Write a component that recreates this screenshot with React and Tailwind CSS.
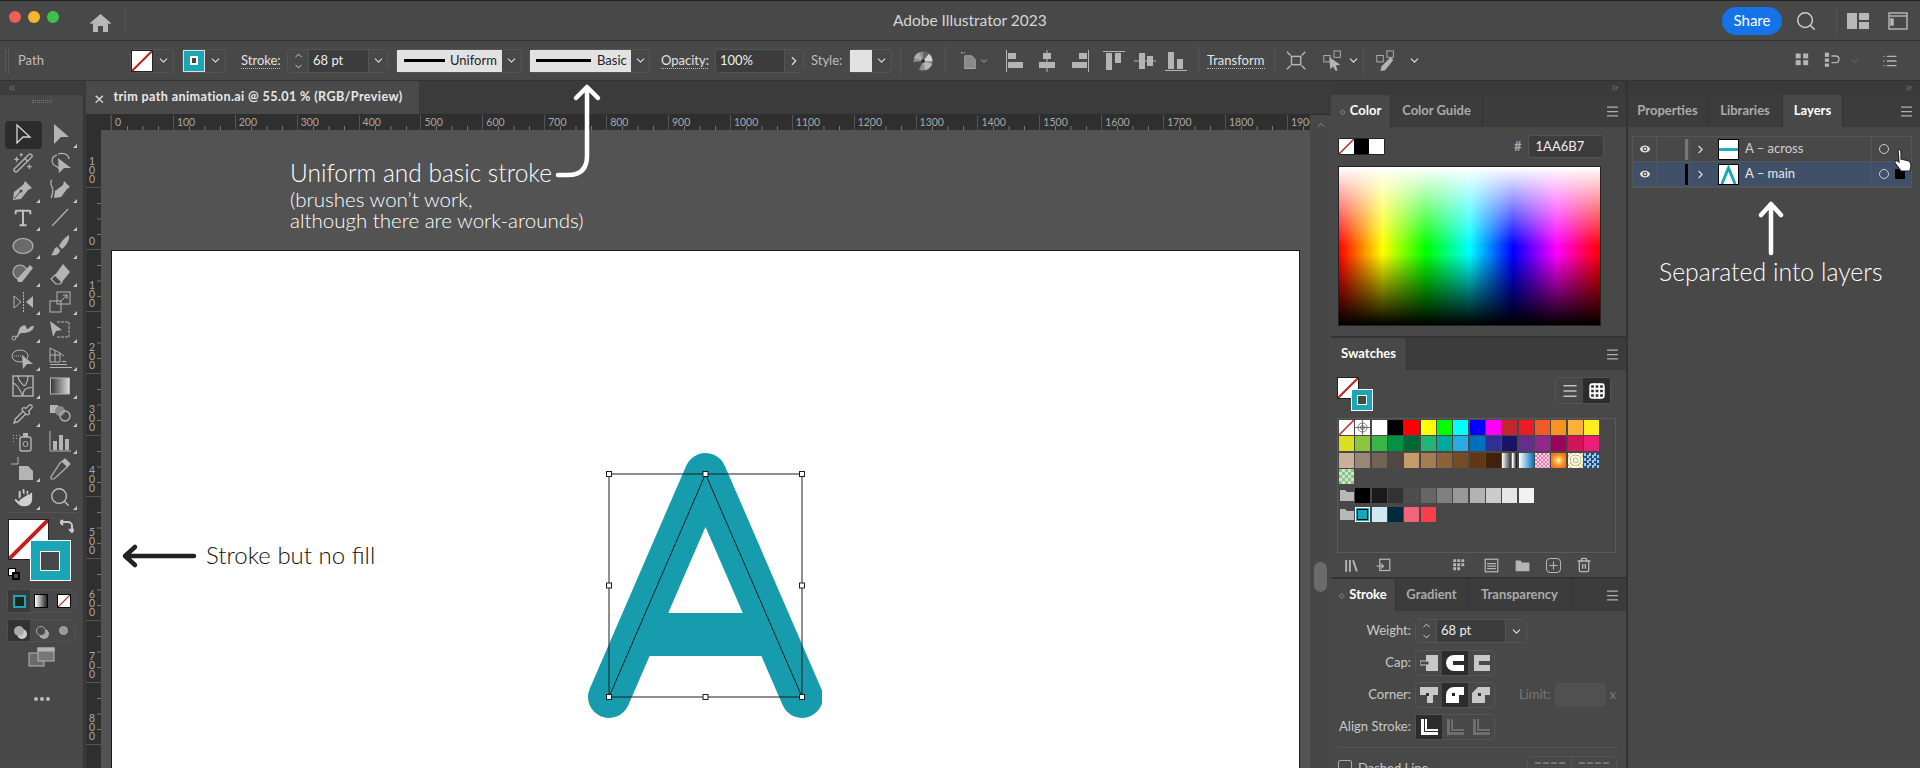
import React from 'react'
import { ChevronDown, ChevronRight, ChevronUp, ChevronsLeft, ChevronsRight, Search, Menu, Trash2, Plus, Eye, List, Grid3x3, Wand2, Type, Pipette, Hand } from 'lucide-react'

const NoneSwatch = ({ className = '' }) => (
  <svg viewBox="0 0 20 20" preserveAspectRatio="none" className={className}>
    <rect width="20" height="20" fill="#fff" />
    <line x1="0" y1="20" x2="20" y2="0" stroke="#c1201f" strokeWidth="2" />
  </svg>
)

const Chev = () => <ChevronDown size={13} strokeWidth={2} className="text-[#dcdcdc]" />

const Divider = ({ className = '' }) => <div className={`h-[28px] w-px bg-[#555] ${className}`} />

const Label = ({ children, className = '' }) => (
  <span className={`border-b border-dotted border-[#bbb] leading-[15px] text-[13px] text-[#e2e2e2] ${className}`}>{children}</span>
)

const G = ({ children, className = '', size = 24, vb = 24 }) => (
  <svg width={size} height={size} viewBox={`0 0 ${vb} ${vb}`} className={className} fill="#b4b4b4" stroke="none">{children}</svg>
)

function AlignIcon({ kind }) {
  const map = {
    l: <><rect x="2" y="1" width="1" height="22" /><rect x="4" y="4" width="8" height="6" /><rect x="4" y="13" width="15" height="6" /></>,
    c: <><rect x="11.5" y="1" width="1" height="22" /><rect x="8" y="4" width="8" height="6" /><rect x="4" y="13" width="16" height="6" /></>,
    r: <><rect x="21" y="1" width="1" height="22" /><rect x="12" y="4" width="8" height="6" /><rect x="5" y="13" width="15" height="6" /></>,
    t: <><rect x="1" y="2" width="22" height="1" /><rect x="4" y="4" width="6" height="17" /><rect x="13" y="4" width="6" height="10" /></>,
    m: <><rect x="1" y="11.5" width="22" height="1" /><rect x="6" y="4" width="6" height="16" /><rect x="14" y="7" width="6" height="10" /></>,
    b: <><rect x="1" y="21" width="22" height="1" /><rect x="4" y="3" width="6" height="17" /><rect x="13" y="10" width="6" height="10" /></>,
  }
  return <G size={24}>{map[kind]}</G>
}

function OptionsBar() {
  return (
    <div className="flex h-[40px] items-center border-b border-[#333] bg-[#484848] pl-[5px]">
      <div className="h-[24px] w-[4px] border-x border-dotted border-[#6a6a6a]" />
      <span className="ml-[9px] w-[112px] text-[13px] text-[#bdbdbd]">Path</span>

      <div className="flex h-[24px] w-[44px] items-center rounded-sm border border-[#555]">
        <NoneSwatch className="h-[22px] w-[22px] shrink-0 border border-[#222]" />
        <div className="flex flex-1 justify-center"><Chev /></div>
      </div>
      <div className="ml-[8px] flex h-[24px] w-[44px] items-center rounded-sm border border-[#555]">
        <div className="flex h-[22px] w-[22px] shrink-0 items-center justify-center border border-[#ddd] bg-[#1aa6b7]">
          <div className="h-[9px] w-[8px] border-2 border-white bg-[#444]" />
        </div>
        <div className="flex flex-1 justify-center"><Chev /></div>
      </div>

      <Label className="ml-[15px] w-[39px]">Stroke:</Label>
      <div className="ml-[7px] flex h-[24px] w-[101px] items-center rounded-sm border border-[#555] bg-[#3c3c3c]">
        <div className="flex h-full w-[21px] flex-col items-center justify-center border-r border-[#555] bg-[#484848]">
          <ChevronUp size={11} className="text-[#ddd]" />
          <ChevronDown size={11} className="text-[#ddd]" />
        </div>
        <span className="ml-[4px] w-[55px] text-[13px] text-[#eee]">68 pt</span>
        <div className="flex h-full flex-1 items-center justify-center border-l border-[#555] bg-[#484848]"><Chev /></div>
      </div>

      <div className="ml-[8px] flex h-[24px] w-[126px] items-center rounded-sm border border-[#555]">
        <div className="flex h-[22px] w-[105px] items-center bg-[#e2e2e2] pl-[7px]">
          <div className="h-[3px] w-[41px] bg-black" />
          <span className="ml-[5px] text-[13px] text-[#222]">Uniform</span>
        </div>
        <div className="flex flex-1 justify-center"><Chev /></div>
      </div>
      <div className="ml-[7px] flex h-[24px] w-[121px] items-center rounded-sm border border-[#555]">
        <div className="flex h-[22px] w-[101px] items-center bg-[#e2e2e2] pl-[6px]">
          <div className="h-[3px] w-[55px] bg-black" />
          <span className="ml-[6px] text-[13px] text-[#222]">Basic</span>
        </div>
        <div className="flex flex-1 justify-center"><Chev /></div>
      </div>

      <Label className="ml-[11px] w-[47px]">Opacity:</Label>
      <div className="ml-[7px] flex h-[24px] w-[89px] items-center rounded-sm border border-[#555] bg-[#3c3c3c]">
        <span className="ml-[4px] w-[64px] text-[13px] text-[#eee]">100%</span>
        <div className="flex h-full flex-1 items-center justify-center border-l border-[#555] bg-[#484848]">
          <ChevronRight size={14} className="text-[#ddd]" />
        </div>
      </div>
      <span className="ml-[7px] w-[30px] text-[13px] text-[#bdbdbd]">Style:</span>
      <div className="ml-[8px] flex h-[24px] w-[43px] items-center rounded-sm border border-[#555]">
        <div className="h-[22px] w-[22px] shrink-0 bg-[#e2e2e2]" />
        <div className="flex flex-1 justify-center"><Chev /></div>
      </div>
      <Divider className="ml-[8px]" />

      <svg width="20" height="20" viewBox="0 0 20 20" className="ml-[12px]">
        <circle cx="10" cy="10" r="9.5" fill="#8f8f8f" />
        <path d="M10 10 L10 .5 A9.5 9.5 0 0 1 16 3 Z" fill="#666" />
        <path d="M10 10 L16 3 A9.5 9.5 0 0 1 19.500 10 Z" fill="#d4d4d4" />
        <path d="M10 10 L19 13 A9.5 9.5 0 0 1 12 19.3 Z" fill="#b5b5b5" />
        <path d="M10 10 L6 19 A9.5 9.5 0 0 1 .6 11 Z" fill="#4a4a4a" />
        <path d="M10 10 L1 7 A9.5 9.5 0 0 1 6 1.400 Z" fill="#adadad" />
        <circle cx="10" cy="10" r="2" fill="#333" />
      </svg>
      <Divider className="ml-[12px]" />

      <div className="ml-[15px] flex w-[28px] items-center">
        <G size={18}><path d="M5 5h9l5 5v12H5z" fill="#888" stroke="#bbb" /><rect x="0" y="0" width="2" height="2" /><rect x="4" y="0" width="1" height="2" /></G>
        <ChevronDown size={10} className="text-[#bbb]" />
      </div>
      <div className="ml-[15px] flex"><AlignIcon kind="l" /></div>
      <div className="ml-[7px] flex"><AlignIcon kind="c" /></div>
      <div className="ml-[8px] flex"><AlignIcon kind="r" /></div>
      <div className="ml-[11px] flex"><AlignIcon kind="t" /></div>
      <div className="ml-[7px] flex"><AlignIcon kind="m" /></div>
      <div className="ml-[7px] flex"><AlignIcon kind="b" /></div>
      <Divider className="ml-[10px]" />
      <Label className="ml-[8px] w-[58px]">Transform</Label>
      <Divider className="ml-[9px]" />

      <G size={22} className="ml-[11px]">
        <rect x="6" y="7" width="10" height="9" fill="none" stroke="#b4b4b4" strokeWidth="1.6" />
        <path d="M1 2l4 4M21 2l-4 4M1 21l4-4M21 21l-4-4" stroke="#b4b4b4" strokeWidth="1.6" />
      </G>
      <G size={22} className="ml-[14px]">
        <rect x="2" y="6" width="7" height="7" fill="none" stroke="#b4b4b4" />
        <rect x="13" y="1" width="7" height="7" fill="none" stroke="#b4b4b4" />
        <path d="M8 8l12 8-5 1 2 5-2 1-3-5-3 3z" />
      </G>
      <ChevronDown size={13} className="ml-[3px] text-[#e0e0e0]" />
      <Divider className="ml-[3px]" />
      <G size={22} className="ml-[11px]">
        <rect x="2" y="6" width="7" height="7" fill="none" stroke="#b4b4b4" />
        <rect x="13" y="1" width="7" height="7" fill="none" stroke="#b4b4b4" />
        <path d="M17 8l3 3-9 11-5 1 1-5z" />
      </G>
      <ChevronDown size={13} className="ml-[11px] text-[#e0e0e0]" />

      <G size={20} className="ml-[373px]">
        <rect x="2" y="3" width="6" height="6" /><rect x="11" y="3" width="6" height="6" /><rect x="2" y="11" width="6" height="6" /><rect x="11" y="11" width="6" height="6" />
        <rect x="0" y="9.4" width="20" height="1" fill="#484848" />
      </G>
      <G size={20} className="ml-[10px]">
        <rect x="1" y="2" width="5" height="5" /><rect x="1" y="9" width="5" height="4" /><rect x="1" y="15" width="5" height="4" />
        <path d="M9 6h5a4 4 0 0 1 0 8H9" fill="none" stroke="#b4b4b4" strokeWidth="1.6" />
      </G>
      <ChevronDown size={12} className="ml-[5px] text-[#6e6e6e]" />
      <List size={16} className="ml-[21px] text-[#b4b4b4]" />
    </div>
  )
}

const cornerTools = [1, 4, 5, 6, 7, 8, 9, 10, 11, 12, 13, 14, 15, 16, 17, 18, 19, 20, 21, 23, 24, 26, 27]

const icons = [
  <G><path d="M6 2l13 12h-7l-6 6z" fill="none" stroke="#d8d8d8" strokeWidth="1.3" /></G>,
  <G><path d="M6 1l15 13h-8l-7 7z" /></G>,
  <Wand2 size={22} strokeWidth={1.5} className="text-[#b4b4b4]" />,
  <G><path d="M10 3c6-2 11 1 11 5M9 4c-5 1-6 6-4 9s6 2 6 5" fill="none" stroke="#b4b4b4" strokeWidth="1.2" /><path d="M10 7l13 10h-7l-5 5z" /></G>,
  <G><path d="M14 3l7 7-4 2-7 9-8 1 1-8 9-7z" /><circle cx="10" cy="13" r="1.5" fill="#484848" /><path d="M3 21l6-7" stroke="#484848" /></G>,
  <G><path d="M16 3l6 6-3 2-6 8-7 1 1-7 8-6z" /><path d="M4 2c-5 5 5 6-1 18" fill="none" stroke="#b4b4b4" strokeWidth="1.2" /></G>,
  <Type size={22} strokeWidth={2.2} className="text-[#c0c0c0]" />,
  <G><line x1="4" y1="20" x2="20" y2="3" stroke="#b4b4b4" strokeWidth="1.2" /></G>,
  <G><ellipse cx="12" cy="12" rx="10" ry="7.5" fill="#6a6a6a" stroke="#b4b4b4" strokeWidth="1.2" /></G>,
  <G><path d="M21 1c1 5-3 11-7 14l-3-3c2-4 6-9 10-11zM9 13l3 3c0 4-4 6-9 5 3-2 2-7 6-8z" /></G>,
  <G><circle cx="9" cy="10" r="7" fill="#6a6a6a" stroke="#b4b4b4" strokeWidth="1.2" /><path d="M22 6l-11 14h-4l-1-3L19 3z" /></G>,
  <G><path d="M15 2l7 8-8 10-7-7z" /><path d="M7 13l7 7-2 2H8l-5-5z" fill="none" stroke="#b4b4b4" strokeWidth="1.2" /></G>,
  <G><path d="M3 6l7 6-7 6z" fill="none" stroke="#b4b4b4" /><path d="M22 6l-7 6 7 6z" /><line x1="12.5" y1="2" x2="12.5" y2="23" stroke="#b4b4b4" strokeDasharray="2 1" /></G>,
  <G><rect x="9" y="2" width="13" height="12" fill="none" stroke="#b4b4b4" /><rect x="2" y="11" width="11" height="11" fill="none" stroke="#b4b4b4" /><path d="M13 11l6-6M15 5h4v4" fill="none" stroke="#b4b4b4" /></G>,
  <G><path d="M3 20c6-3 3-9 8-12s4 4 6 3 3-4 6-3c-1 6-7 7-11 7s-4 2-5 4" /><circle cx="3" cy="20" r="2" fill="none" stroke="#b4b4b4" /></G>,
  <G><path d="M2 3l12 9-6 1-3 6z" /><path d="M9 4h12v15H8" fill="none" stroke="#b4b4b4" strokeDasharray="3 1" /></G>,
  <G><ellipse cx="9" cy="10" rx="8" ry="6" fill="none" stroke="#b4b4b4" /><path d="M11 9l11 9h-6l-4 5z" /><line x1="3" y1="10" x2="12" y2="10" stroke="#b4b4b4" strokeDasharray="1 1" /></G>,
  <G><path d="M2 2l10 5v9H2zM12 7l4 3M2 9h10M7 4v12" fill="none" stroke="#b4b4b4" /><path d="M2 18h17v1H2zM2 21h22v1H2zM14 15h4v1h-4z" /></G>,
  <G><rect x="2" y="2" width="20" height="20" fill="none" stroke="#b4b4b4" strokeWidth="1.4" /><path d="M2 9c6 2 6 7 10 13M12 22c0-7 3-8 10-9M7 2c0 5 3 6 5 9s5-4 5-9" fill="none" stroke="#b4b4b4" strokeWidth="1.2" /></G>,
  <svg width="20" height="20" viewBox="0 0 20 20"><defs><linearGradient id="tg"><stop stopColor="#333" /><stop offset="1" stopColor="#ddd" /></linearGradient></defs><rect x=".5" y="2" width="19" height="16" fill="url(#tg)" stroke="#b4b4b4" /></svg>,
  <Pipette size={22} strokeWidth={1.5} className="text-[#b4b4b4]" />,
  <G><rect x="2" y="3" width="8" height="8" /><circle cx="12" cy="9" r="5" fill="#888" /><circle cx="17" cy="14" r="5" fill="none" stroke="#b4b4b4" strokeWidth="1.4" /></G>,
  <G><rect x="9" y="8" width="11" height="14" rx="2" fill="none" stroke="#b4b4b4" strokeWidth="1.4" /><circle cx="14.5" cy="15" r="2.5" fill="none" stroke="#b4b4b4" /><rect x="12" y="4" width="5" height="4" /><path d="M2 6h1v1H2zM5 6h1v1H5zM8 6h1v1H8zM2 9h1v1H2zM5 9h1v1H5zM2 12h1v1H2z" /></G>,
  <G><path d="M2 2v20h21" fill="none" stroke="#b4b4b4" /><rect x="5" y="12" width="4" height="9" /><rect x="11" y="6" width="4" height="15" /><rect x="17" y="10" width="4" height="11" /></G>,
  <G><path d="M8 9h9l5 5v9H8z" /><path d="M7 0v7M0 7h7" stroke="#b4b4b4" fill="none" /></G>,
  <G><path d="M17 2l5 5-3 3-13 12H3v-2l9-14z" fill="none" stroke="#b4b4b4" strokeWidth="1.2" /><path d="M17 2l5 5-3 3-5-5z" /></G>,
  <Hand size={23} fill="#d0d0d0" className="text-[#484848]" />,
  <Search size={22} strokeWidth={1.5} className="text-[#c0c0c0]" />,
]

function Toolbar() {
  return (
    <div className="flex w-[86px] shrink-0 flex-col">
      <div className="flex h-[14px] items-center bg-[#3c3c3c] pl-[7px]">
        <ChevronsLeft size={10} className="text-[#8a8a8a]" />
      </div>
      <div className="flex h-full w-[84px] flex-col items-center border-r border-[#333] bg-[#484848]">
        <div className="mt-[5px] h-[3px] w-[20px] border-y border-dotted border-[#777]" />
        <div className="mt-[18px] grid w-[74px] grid-cols-2 auto-rows-[27.9px]">
          {icons.map((icon, i) => (
            <div key={i} className={`relative flex items-center justify-center ${i === 0 ? 'rounded-sm bg-[#2c2c2c]' : ''}`}>
              {icon}
              {cornerTools.includes(i) && (
                <div className="absolute bottom-[1px] right-[2px] h-0 w-0 border-b-[4px] border-l-[4px] border-b-[#c8c8c8] border-l-transparent" />
              )}
            </div>
          ))}
        </div>

        <div className="relative mt-[1px] h-[65px] w-[70px] border-t border-[#555]">
          <NoneSwatch className="absolute left-[1px] top-[6px] h-[41px] w-[41px] border border-[#222]" />
          <div className="absolute left-[23px] top-[27px] flex h-[41px] w-[41px] items-center justify-center border border-white bg-[#1aa6b7]">
            <div className="h-[20px] w-[20px] border border-white bg-[#484848]" />
          </div>
          <svg width="14" height="14" viewBox="0 0 14 14" className="absolute left-[53px] top-[6px]" fill="none" stroke="#c8c8c8" strokeWidth="2">
            <path d="M1 3h7a4 4 0 0 1 4 4v5M0 3l3-2M0 3l3 3M9 10l3 3 2-3" />
          </svg>
          <div className="absolute left-[1px] top-[55px] h-[8px] w-[8px] border border-black bg-white" />
          <div className="absolute left-[5px] top-[59px] h-[8px] w-[8px] border-2 border-black bg-[#484848]" />
        </div>

        <div className="mt-[12px] flex w-[69px] rounded-sm border border-[#505050]">
          <div className="flex h-[22px] w-[23px] items-center justify-center bg-[#3a3a3a]">
            <div className="h-[13px] w-[13px] border-2 border-[#1aa6b7] bg-[#222]" />
          </div>
          <div className="flex h-[22px] w-[23px] items-center justify-center">
            <div className="h-[14px] w-[14px] border border-black bg-[linear-gradient(to_right,#fff,#222)]" />
          </div>
          <div className="flex h-[22px] w-[23px] items-center justify-center">
            <NoneSwatch className="h-[14px] w-[14px] border border-black" />
          </div>
        </div>
        <div className="mt-[6px] flex w-[69px] rounded-sm border border-[#505050]">
          <div className="flex h-[21px] w-[23px] items-center justify-center bg-[#333]">
            <div className="h-[10px] w-[10px] rounded-full bg-[#aaa] shadow-[3px_3px_0_#ccc]" />
          </div>
          <div className="flex h-[21px] w-[23px] items-center justify-center">
            <div className="h-[10px] w-[10px] rounded-full border border-[#aaa] shadow-[3px_3px_0_#aaa]" />
          </div>
          <div className="flex h-[21px] w-[23px] items-center justify-center">
            <div className="h-[9px] w-[9px] rounded-full border border-[#aaa] bg-[#999]" />
          </div>
        </div>
        <svg width="28" height="20" viewBox="0 0 28 20" className="mt-[5px]" fill="#6a6a6a" stroke="#b4b4b4">
          <rect x="1" y="6" width="15" height="13" />
          <rect x="10" y="1" width="16" height="13" fill="#777" />
          <rect x="10" y="1" width="16" height="3" fill="#b4b4b4" />
        </svg>
        <div className="mt-[30px] flex gap-[2px]">
          <div className="h-[4px] w-[4px] rounded-full bg-[#bbb]" />
          <div className="h-[4px] w-[4px] rounded-full bg-[#bbb]" />
          <div className="h-[4px] w-[4px] rounded-full bg-[#bbb]" />
        </div>
      </div>
    </div>
  )
}

const MinorTicksH = () => (
  <svg width="62" height="4" className="absolute bottom-0 left-0" stroke="#777">
    <line x1="15.5" y1="0" x2="15.5" y2="4" /><line x1="31" y1="0" x2="31" y2="4" /><line x1="46.5" y1="0" x2="46.5" y2="4" />
  </svg>
)

const MinorTicksV = () => (
  <svg width="4" height="62" className="absolute right-0 top-0" stroke="#777">
    <line x1="0" y1="15.5" x2="4" y2="15.5" /><line x1="0" y1="31" x2="4" y2="31" /><line x1="0" y1="46.5" x2="4" y2="46.5" />
  </svg>
)

const HRULER = ['0', '100', '200', '300', '400', '500', '600', '700', '800', '900', '1000', '1100', '1200', '1300', '1400', '1500', '1600', '1700', '1800', '1900']
const VRULER = ['0', '100', '200', '300', '400', '500', '600', '700', '800']

function Rulers() {
  return (
    <div className="flex h-[15px] shrink-0 bg-[#2f2f2f]">
      <div className="w-[25px] shrink-0 border-r border-[#444]" />
      {HRULER.map((n, i) => (
        <div key={i} className="relative h-full w-[61.9px] shrink-0 overflow-hidden border-l border-[#555] pl-[3px] text-[10.5px] leading-[14px] text-[#a8a8a8]">
          {n}
          <MinorTicksH />
        </div>
      ))}
    </div>
  )
}

function RulerLabel({ n }) {
  return n.split('').map((c, j) => <span key={j}>{c}</span>)
}

function Canvas() {
  return (
    <div className="relative flex min-h-0 flex-1 overflow-hidden">
      <div className="flex w-[15px] shrink-0 flex-col bg-[#2f2f2f]">
        <div className="relative flex h-[58px] shrink-0 flex-col items-center justify-end border-b border-[#555] pb-[3px] pr-[3px] text-[10.5px] leading-[9px] text-[#a8a8a8]">
          <RulerLabel n="100" />
        </div>
        {VRULER.map((n) => (
          <div key={n} className="relative flex h-[61.9px] shrink-0 flex-col items-center justify-end border-b border-[#555] pb-[3px] pr-[3px] text-[10.5px] leading-[9px] text-[#a8a8a8]">
            <RulerLabel n={n} />
            <MinorTicksV />
          </div>
        ))}
      </div>
      <div className="min-w-0 flex-1 bg-[#535353] pl-[10px] pr-[10px] pt-[120px]">
        <div className="relative h-[600px] border border-[#1a1a1a] bg-white">
          <svg width="240" height="300" viewBox="0 0 240 300" className="absolute left-[470px] top-[190px]">
            <g fill="none" stroke="#179cad" strokeWidth="42" strokeLinecap="round" strokeLinejoin="round">
              <path d="M27 256 L123.5 33 L220 256" />
            </g>
            <rect x="50" y="172" width="150" height="43" fill="#179cad" />
            <g fill="none" stroke="#1f1f1f" strokeWidth="1">
              <path d="M27 256 L123.5 33 L220 256" />
              <rect x="27" y="33" width="193" height="223" />
            </g>
            <g fill="#fff" stroke="#1f1f1f">
              {[[27, 33], [123.5, 33], [220, 33], [27, 144.5], [220, 144.5], [27, 256], [123.5, 256], [220, 256]].map(([x, y]) => (
                <rect key={`${x}-${y}`} x={x - 2.5} y={y - 2.5} width="5" height="5" />
              ))}
            </g>
          </svg>
        </div>
      </div>
    </div>
  )
}

function DocumentArea() {
  return (
    <div className="flex w-[1245px] shrink-0 flex-col">
      <div className="flex h-[34px] shrink-0 border-b border-[#2e2e2e] bg-[#3b3b3b]">
        <div className="flex w-[333px] items-center bg-[#4a4a4a] pl-[8px]">
          <span className="text-[18px] leading-none text-[#dedede]">×</span>
          <span className="ml-[9px] text-[12.6px] font-bold tracking-[0.38px] text-[#e8e8e8]">trim path animation.ai @ 55.01 % (RGB/Preview)</span>
        </div>
      </div>
      <div className="flex min-h-0 flex-1">
        <div className="flex min-w-0 flex-1 flex-col overflow-hidden">
          <Rulers />
          <Canvas />
        </div>
        <div className="relative w-[21px] shrink-0 bg-[#474747]">
          <ChevronUp size={12} className="mx-auto mt-[4px] text-[#8a8a8a]" />
          <div className="mx-auto mt-[431px] h-[30px] w-[13px] rounded-full bg-[#6b6b6b]" />
        </div>
      </div>
    </div>
  )
}

const SWATCHES = [
  'bg-white', 'bg-white', 'bg-white', 'bg-black', 'bg-[#ff0000]', 'bg-[#ffff00]', 'bg-[#00ff00]', 'bg-[#00ffff]', 'bg-[#0000ff]', 'bg-[#ff00ff]', 'bg-[#c1272d]', 'bg-[#ed1c24]', 'bg-[#f15a24]', 'bg-[#f7931e]', 'bg-[#fbb03b]', 'bg-[#fcee21]',
  'bg-[#d9e021]', 'bg-[#8cc63f]', 'bg-[#39b54a]', 'bg-[#009245]', 'bg-[#006837]', 'bg-[#22b573]', 'bg-[#00a99d]', 'bg-[#29abe2]', 'bg-[#0071bc]', 'bg-[#2e3192]', 'bg-[#1b1464]', 'bg-[#662d91]', 'bg-[#93278f]', 'bg-[#9e005d]', 'bg-[#d4145a]', 'bg-[#ed1e79]',
  'bg-[#c7b299]', 'bg-[#998675]', 'bg-[#736357]', 'bg-[#534741]', 'bg-[#c69c6d]', 'bg-[#a67c52]', 'bg-[#8c6239]', 'bg-[#754c24]', 'bg-[#603813]', 'bg-[#42210b]',
  'bg-[linear-gradient(to_right,#fff,#333_60%,#fff_70%,#000)]', 'bg-[linear-gradient(to_right,#fff,#0071bc)]',
  'bg-[repeating-conic-gradient(#f07ab0_0_25%,#fbd5e5_0_50%)] bg-[length:4px_4px]', 'bg-[radial-gradient(circle,#fff2b0,#f7931e_50%,#f15a24)]',
  'bg-[repeating-radial-gradient(circle,#fff8e0_0_2px,#c8c090_2px_3px)]', 'bg-[repeating-conic-gradient(#1b4f8a_0_25%,#a8c8e0_0_50%)] bg-[length:5px_5px]',
  'bg-[repeating-conic-gradient(#d8e8a0_0_25%,#80c0b0_0_50%)] bg-[length:6px_6px]',
]
const GRAYS = ['bg-black', 'bg-[#1a1a1a]', 'bg-[#333]', 'bg-[#4d4d4d]', 'bg-[#666]', 'bg-[#808080]', 'bg-[#999]', 'bg-[#b3b3b3]', 'bg-[#ccc]', 'bg-[#e6e6e6]', 'bg-[#f2f2f2]']
const TEAMS = ['bg-[#d0e8f0]', 'bg-[#002b3f]', 'bg-[#f1647a]', 'bg-[#fb3f4a]']

const Folder = () => (
  <svg width="14" height="12" viewBox="0 0 14 12" fill="#b8b8b8"><path d="M0 1h5l2 2h7v9H0z" /></svg>
)

function PanelHead({ tabs, widths, dots }) {
  return (
    <div className="flex h-[32px] shrink-0 items-stretch bg-[#3c3c3c]">
      {tabs.map((t, i) => (
        <div key={t.name} className={`flex items-center justify-center border-r border-[#333] text-[13px] font-bold ${widths[i]} ${t.on ? 'bg-[#484848] text-white' : 'text-[#ababab]'}`}>
          {dots && t.on && <span className="mr-[5px] text-[7px] leading-[7px] text-[#8a8a8a]">◇</span>}
          {t.name}
        </div>
      ))}
      <div className="ml-auto flex items-center pr-[6px]"><Menu size={15} className="text-[#b0b0b0]" /></div>
    </div>
  )
}

function ColorPanel() {
  return (
    <div className="h-[257px] shrink-0 border-b-2 border-[#333] bg-[#484848]">
      <div className="flex h-[14px] items-center justify-end bg-[#3a3a3a] pr-[6px]"><ChevronsRight size={10} className="text-[#8a8a8a]" /></div>
      <PanelHead tabs={[{ name: 'Color', on: true }, { name: 'Color Guide' }]} widths={['w-[60px]', 'w-[92px]']} dots />
      <div className="px-[7px]">
        <div className="flex h-[39px] items-center">
          <div className="flex rounded-[2px] border border-[#222]">
            <NoneSwatch className="h-[15px] w-[15px]" />
            <div className="h-[15px] w-[15px] bg-black" />
            <div className="h-[15px] w-[15px] bg-white" />
          </div>
          <span className="ml-[129px] text-[13px] font-bold text-[#aaa]">#</span>
          <div className="ml-[6px] flex h-[23px] w-[76px] items-center rounded-sm border border-[#555] bg-[#3c3c3c] pl-[7px] text-[13px] text-[#eee]">1AA6B7</div>
        </div>
        <div className="h-[160px] w-[263px] border border-[#222] bg-[linear-gradient(to_bottom,#fff,transparent_50%,transparent_55%,#000),linear-gradient(to_right,#f00,#ff0,#0f0,#0ff,#00f,#f0f,#f00)]" />
      </div>
    </div>
  )
}

function SwatchesPanel() {
  return (
    <div className="h-[241px] shrink-0 border-b-2 border-[#333] bg-[#484848]">
      <PanelHead tabs={[{ name: 'Swatches', on: true }]} widths={['w-[76px]']} />
      <div className="px-[6px] pt-[7px]">
        <div className="flex h-[34px] justify-between pr-[9px]">
          <div className="relative h-[34px] w-[36px]">
            <NoneSwatch className="absolute left-0 top-0 h-[22px] w-[22px] border border-[#222]" />
            <div className="absolute bottom-0 right-0 flex h-[22px] w-[22px] items-center justify-center border border-white bg-[#1aa6b7]">
              <div className="h-[10px] w-[10px] border border-white bg-[#484848]" />
            </div>
          </div>
          <div className="flex h-[27px] w-[56px] rounded-sm border border-[#555]">
            <div className="flex w-[28px] items-center justify-center"><Menu size={18} className="text-[#c0c0c0]" /></div>
            <div className="flex w-[28px] items-center justify-center bg-[#2c2c2c]"><Grid3x3 size={18} strokeWidth={2.4} className="text-white" /></div>
          </div>
        </div>
        <div className="mt-[7px] h-[135px] w-[279px] border border-[#5a5a5a] px-[1px] pt-[1px]">
          <div className="grid grid-cols-[repeat(16,15px)] gap-[1.33px]">
            {SWATCHES.map((c, i) => (
              <div key={i} className={`h-[15px] w-[15px] ${c}`}>
                {i === 0 && <NoneSwatch className="h-full w-full" />}
                {i === 1 && (
                  <svg viewBox="0 0 15 15" fill="none" stroke="#555" strokeWidth=".8"><circle cx="7.5" cy="7.5" r="4.5" /><circle cx="7.5" cy="7.5" r="2" /><path d="M0 7.5h15M7.5 0v15" /></svg>
                )}
              </div>
            ))}
          </div>
          <div className="mt-[4px] grid grid-cols-[repeat(16,15px)] gap-[1.33px]">
            <div className="flex h-[15px] items-center justify-center"><Folder /></div>
            {GRAYS.map((c, i) => <div key={i} className={`h-[15px] w-[15px] ${c}`} />)}
          </div>
          <div className="mt-[4px] grid grid-cols-[repeat(16,15px)] gap-[1.33px]">
            <div className="flex h-[15px] items-center justify-center"><Folder /></div>
            <div className="flex h-[15px] w-[15px] items-center justify-center border border-white bg-[#1aa6b7]"><div className="h-[11px] w-[11px] border border-black bg-[#1aa6b7]" /></div>
            {TEAMS.map((c, i) => <div key={i} className={`h-[15px] w-[15px] ${c}`} />)}
          </div>
        </div>
        <div className="mt-[4px] flex items-center pl-[7px] text-[#b8b8b8]">
          <G size={15}><path d="M2 3h3v19H2zM8 3h3v19H8zM13 4l3-1 6 18-3 1z" /></G>
          <G size={15} className="ml-[17px]"><rect x="6" y="2" width="16" height="18" fill="none" stroke="#b4b4b4" strokeWidth="2" /><path d="M1 13h11M8 9l4 4-4 4" fill="none" stroke="#b4b4b4" strokeWidth="2" /></G>
          <G size={14} className="ml-[61px]"><path d="M2 2h5v5H2zM9 2h5v5H9zM16 2h5v5h-5zM2 9h5v5H2zM9 9h5v5H9zM16 9h5v5h-5zM2 16h5v5H2zM9 16h5v5H9z" /></G>
          <G size={15} className="ml-[18px]"><rect x="2" y="2" width="20" height="20" fill="none" stroke="#b4b4b4" strokeWidth="2" /><path d="M5 8h14v2H5zM5 12h14v2H5zM5 16h14v2H5z" /></G>
          <G size={15} className="ml-[16px]"><path d="M1 4h8l2 3h12v14H1z" /></G>
          <Plus size={15} className="ml-[16px] rounded-sm border border-[#b4b4b4]" />
          <Trash2 size={16} className="ml-[15px]" />
        </div>
      </div>
    </div>
  )
}

const Seg = ({ on, children, className = '' }) => (
  <div className={`flex h-[24px] w-[26px] items-center justify-center ${on ? 'bg-[#2c2c2c]' : ''} ${className}`}>{children}</div>
)

const capIcon = (fill, kind) => (
  <svg width="18" height="16" viewBox="0 0 18 16" fill={fill}>
    {kind === 0 && <><path d="M6 0h12v16H6z" /><rect x="0" y="6" width="9" height="4" fill="#484848" stroke="#c8c8c8" /></>}
    {kind === 1 && <><path d="M8 0h10v16H8a8 8 0 0 1 0-16z" /><rect x="7" y="6" width="11" height="4" fill="#2c2c2c" /></>}
    {kind === 2 && <><path d="M2 0h16v16H2z" /><rect x="7" y="6" width="11" height="4" fill="#484848" /></>}
    {kind === 3 && <><path d="M0 0h18v8h-5v8H7V8H0z" /><rect x="6" y="6" width="3" height="3" fill="#333" /></>}
    {kind === 4 && <><path d="M8 0h10v8h-5v8H0V8a8 8 0 0 1 8-8z" /><rect x="6" y="6" width="3" height="3" fill="#222" /></>}
    {kind === 5 && <><path d="M6 0h12v8h-5v8H0V6z" /><rect x="6" y="6" width="3" height="3" fill="#333" /></>}
    {kind === 6 && <><path d="M1 0h6v10h11v6H1z" /><rect x="4" y="0" width="1" height="13" fill="#2c2c2c" /><rect x="4" y="12" width="14" height="1" fill="#2c2c2c" /></>}
  </svg>
)

function StrokePanel() {
  return (
    <div className="min-h-0 flex-1 bg-[#484848]">
      <PanelHead tabs={[{ name: 'Stroke', on: true }, { name: 'Gradient' }, { name: 'Transparency' }]} widths={['w-[65px]', 'w-[72px]', 'w-[104px]']} dots />
      <div className="pt-[8px] text-[13px] text-[#c8c8c8]">
        <div className="flex h-[24px] items-center">
          <span className="w-[80px] text-right">Weight:</span>
          <div className="ml-[4px] flex h-[24px] w-[112px] items-center rounded-sm border border-[#555] bg-[#3c3c3c]">
            <div className="flex h-full w-[21px] flex-col items-center justify-center border-r border-[#555] bg-[#484848]">
              <ChevronUp size={11} className="text-[#ddd]" />
              <ChevronDown size={11} className="text-[#ddd]" />
            </div>
            <span className="ml-[4px] w-[64px] text-[#eee]">68 pt</span>
            <div className="flex h-full flex-1 items-center justify-center border-l border-[#555] bg-[#484848]"><Chev /></div>
          </div>
        </div>
        <div className="mt-[7px] flex h-[26px] items-center">
          <span className="w-[80px] text-right">Cap:</span>
          <div className="ml-[4px] flex rounded-sm border border-[#555]">
            <Seg>{capIcon('#c8c8c8', 0)}</Seg>
            <Seg on>{capIcon('#fff', 1)}</Seg>
            <Seg>{capIcon('#c8c8c8', 2)}</Seg>
          </div>
        </div>
        <div className="mt-[6px] flex h-[26px] items-center">
          <span className="w-[80px] text-right">Corner:</span>
          <div className="ml-[4px] flex rounded-sm border border-[#555]">
            <Seg>{capIcon('#c8c8c8', 3)}</Seg>
            <Seg on>{capIcon('#fff', 4)}</Seg>
            <Seg>{capIcon('#c8c8c8', 5)}</Seg>
          </div>
          <span className="ml-[24px] text-[#777]">Limit:</span>
          <div className="ml-[4px] h-[24px] w-[51px] rounded-sm bg-[#505050]" />
          <span className="ml-[4px] text-[#777]">x</span>
        </div>
        <div className="mt-[6px] flex h-[26px] items-center">
          <span className="w-[80px] text-right">Align Stroke:</span>
          <div className="ml-[4px] flex rounded-sm border border-[#555]">
            <Seg on>{capIcon('#fff', 6)}</Seg>
            <Seg className="opacity-30">{capIcon('#c8c8c8', 6)}</Seg>
            <Seg className="opacity-30">{capIcon('#c8c8c8', 6)}</Seg>
          </div>
        </div>
        <div className="mx-[7px] mt-[7px] border-t border-[#555]" />
        <div className="mt-[8px] flex items-start pl-[7px]">
          <div className="mt-[4px] h-[14px] w-[14px] rounded-[2px] border border-[#aaa]" />
          <span className="ml-[6px] mt-[3px]">Dashed Line</span>
          <div className="ml-[99px] flex h-[30px] w-[90px] rounded-sm border border-[#555]">
            <div className="flex w-[45px] items-start justify-center border-r border-[#555] pt-[5px]"><div className="h-[10px] w-[30px] border-t-2 border-dashed border-[#777]" /></div>
            <div className="flex w-[45px] items-start justify-center pt-[5px]"><div className="h-[10px] w-[30px] border-t-2 border-dashed border-[#777]" /></div>
          </div>
        </div>
      </div>
    </div>
  )
}

function LayersPanel() {
  const rows = [
    { name: 'A – across', bar: 'bg-[#777]', on: false },
    { name: 'A – main', bar: 'bg-black', on: true },
  ]
  return (
    <div className="flex w-[294px] shrink-0 flex-col border-l-2 border-[#333] bg-[#484848]">
      <div className="flex h-[14px] items-center justify-end bg-[#3a3a3a] pr-[6px]"><ChevronsRight size={10} className="text-[#8a8a8a]" /></div>
      <PanelHead tabs={[{ name: 'Properties' }, { name: 'Libraries' }, { name: 'Layers', on: true }]} widths={['w-[80px]', 'w-[75px]', 'w-[60px]']} />
      <div className="ml-[4px] mr-[8px] mt-[9px] border border-[#555]">
        {rows.map((r) => (
          <div key={r.name} className={`flex h-[25px] items-center border-b border-[#555] text-[13px] ${r.on ? 'bg-[#405068] text-[#e8e8e8]' : 'text-[#d0d0d0]'}`}>
            <div className="flex h-full w-[24px] items-center justify-center border-r border-[#555]"><Eye size={14} fill="#ddd" className="text-[#484848]" /></div>
            <div className="ml-[28px] h-[21px] w-[3px] rounded-sm">
              <div className={`h-full w-full ${r.bar}`} />
            </div>
            <div className="ml-[1px] flex h-full w-[21px] items-center justify-center border-l border-[#555]"><ChevronRight size={13} className="text-[#ddd]" /></div>
            <div className="ml-[8px] h-[21px] w-[21px] shrink-0 border border-black bg-white">
              <svg viewBox="0 0 20 20" fill="none" stroke="#1aa6b7" strokeWidth="3">
                {r.on ? <path d="M3 20L10 3l7 17" /> : <path d="M0 10h20" />}
              </svg>
            </div>
            <span className="ml-[6px] w-[126px]">{r.name}</span>
            <div className="flex h-full flex-1 items-center border-l border-[#555] pl-[7px]">
              <div className="h-[10px] w-[10px] rounded-full border border-[#ccc]" />
              {r.on && <div className="ml-[6px] h-[10px] w-[10px] bg-black" />}
            </div>
          </div>
        ))}
      </div>
    </div>
  )
}

function Annotations() {
  return (
    <>
      <svg width="1920" height="768" className="pointer-events-none absolute left-0 top-0" fill="none" strokeLinecap="round" strokeLinejoin="round">
        <path d="M558 175h10q19 0 19-19V88M576 98l11-11 11 11" stroke="#fff" strokeWidth="4.5" />
        <path d="M1771 253V206M1761 215l10-11 10 11" stroke="#fff" strokeWidth="4.5" />
        <path d="M194 556H125M135 547l-10 9 10 9" stroke="#222" strokeWidth="4.5" />
      </svg>
      <p className="absolute left-[290px] top-[158px] whitespace-nowrap font-['Lato'] text-[24.5px] font-light leading-[30px] text-white">Uniform and basic stroke</p>
      <p className="absolute left-[290px] top-[189px] whitespace-nowrap font-['Lato'] text-[20.5px] font-light leading-[21px] text-white">(brushes won’t work,<br />although there are work-arounds)</p>
      <p className="absolute left-[1659px] top-[257px] whitespace-nowrap font-['Lato'] text-[24.8px] font-light leading-[30px] text-white">Separated into layers</p>
      <p className="absolute left-[206px] top-[540px] whitespace-nowrap font-['Lato'] text-[24px] font-light leading-[30px] text-[#111]">Stroke but no fill</p>
      <svg width="20" height="26" viewBox="0 0 20 26" className="absolute left-[1893px] top-[148px]">
        <path d="M5 2c2-1 3 0 3 2v7l8 2c2 1 2 3 2 5l-1 5H8l-6-8c-1-2 1-3 3-2l1 1z" fill="#fff" stroke="#222" strokeWidth="1.2" />
      </svg>
    </>
  )
}

export default function App() {
  return (
    <div className="relative flex h-[768px] w-[1920px] flex-col overflow-hidden bg-[#3b3b3b] font-['Lato',sans-serif]">
      {/* Title bar */}
      <div className="relative flex h-[41px] shrink-0 items-center border-t border-[#222] border-b border-b-[#333] bg-[#484848] pl-[9px]">
        <div className="-mt-[7px] flex gap-[7px]">
          <div className="h-[12px] w-[12px] rounded-full bg-[#ed5f57]" />
          <div className="h-[12px] w-[12px] rounded-full bg-[#f6b62e]" />
          <div className="h-[12px] w-[12px] rounded-full bg-[#3fc24a]" />
        </div>
        <svg width="21" height="18" viewBox="0 0 21 18" fill="#b8b8b8" className="ml-[31px] mt-[4px]">
          <path d="M10.5 0L21 9l-1.4 1.4-1.6-1.3V18h-5v-6H8v6H3V9.100L1.400 10.400 0 9z" />
        </svg>
        <div className="ml-[14px] h-[28px] w-px bg-[#555]" />
        <span className="ml-[767px] w-[154px] whitespace-nowrap text-[15.5px] text-[#d6d6d6]">Adobe Illustrator 2023</span>
        <div className="ml-[675px] flex h-[28px] w-[60px] items-center justify-center rounded-full bg-[#1473e6] text-[15px] text-white">Share</div>
        <Search size={22} strokeWidth={1.6} className="ml-[13px] text-[#d0d0d0]" />
        <div className="ml-[19px] h-[28px] w-px bg-[#555]" />
        <svg width="22" height="18" viewBox="0 0 22 18" fill="#b8b8b8" className="ml-[10px]">
          <path d="M0 1h10v16H0zM12 1h10v7H12zM12 10h10v7H12z" />
        </svg>
        <svg width="20" height="18" viewBox="0 0 20 18" fill="none" stroke="#b8b8b8" strokeWidth="1.4" className="ml-[19px]">
          <rect x="1" y="1" width="18" height="16" />
          <path d="M1 4h18" />
          <rect x="3" y="7" width="2" height="6" fill="#b8b8b8" />
        </svg>
      </div>

      <OptionsBar />

      <div className="flex min-h-0 flex-1">
        <Toolbar />
        <DocumentArea />
        <div className="flex w-[295px] shrink-0 flex-col">
          <ColorPanel />
          <SwatchesPanel />
          <StrokePanel />
        </div>
        <LayersPanel />
      </div>

      <Annotations />
    </div>
  )
}
